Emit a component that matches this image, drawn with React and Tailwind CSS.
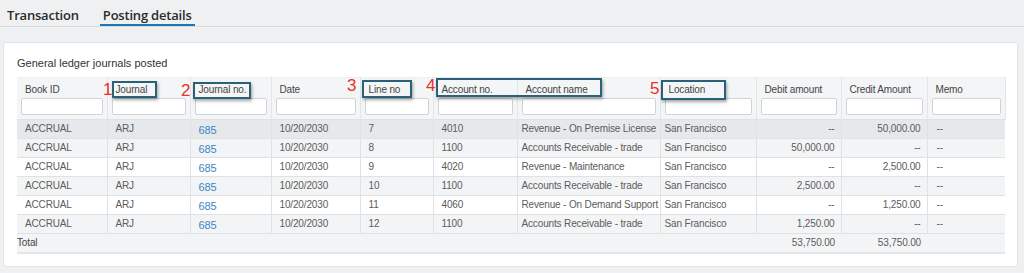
import React from "react";

const cols = [90, 83, 81, 89, 73, 84, 143, 96, 85, 86, 78];
const headers = ["Book ID", "Journal", "Journal no.", "Date", "Line no", "Account no.", "Account name", "Location", "Debit amount", "Credit Amount", "Memo"];

const rows = [
  ["7", "4010", "Revenue - On Premise License", "--", "50,000.00"],
  ["8", "1100", "Accounts Receivable - trade", "50,000.00", "--"],
  ["9", "4020", "Revenue - Maintenance", "--", "2,500.00"],
  ["10", "1100", "Accounts Receivable - trade", "2,500.00", "--"],
  ["11", "4060", "Revenue - On Demand Support", "--", "1,250.00"],
  ["12", "1100", "Accounts Receivable - trade", "1,250.00", "--"],
];

const rowBg = ["bg-[#e6e9eb]", "bg-[#f3f4f5]", "bg-white", "bg-[#f3f4f5]", "bg-white", "bg-[#f3f4f5]"];

function Box({ className }) {
  return (
    <div
      className={
        "absolute border-2 border-[#2b6079] shadow-[1px_2px_3px_rgba(0,0,0,0.35)] " + className
      }
    />
  );
}

function Num({ className, children }) {
  return (
    <div className={"absolute text-[17px] leading-none text-[#e5322d] font-['Liberation_Sans',Arial,sans-serif] " + className}>
      {children}
    </div>
  );
}

export default function App() {
  const td = "border-r border-[#dfe2e4] px-[8px] whitespace-nowrap overflow-hidden";
  return (
    <div className="relative w-[1024px] h-[273px] overflow-hidden bg-[#eff0f1] font-['Liberation_Sans',Arial,sans-serif] text-[#5c5c5c]">
      {/* Tabs */}
      <div className="flex h-[27px] items-start border-b border-[#d8dbdd] pl-[7px]">
        <div className="pt-[7px] text-[13px] leading-[17px] font-semibold text-[#2b2b2b] font-['Open_Sans',sans-serif] tracking-[-0.2px]">
          Transaction
        </div>
        <div className="ml-[21px] flex flex-col items-center">
          <div className="pt-[7px] px-[3px] text-[13px] leading-[17px] font-semibold text-[#2b2b2b] font-['Open_Sans',sans-serif] tracking-[-0.2px]">
            Posting details
          </div>
          <div className="h-[2px] w-full bg-[#1e78b4]" />
        </div>
      </div>

      {/* Card */}
      <div className="ml-[3px] mt-[15px] w-[1015px] h-[225px] rounded-[3px] border border-[#e1e4e6] bg-white pl-[13px]">
        <div className="pt-[13px] h-[34px] text-[11px] leading-[14px] text-[#333]">General ledger journals posted</div>
        <table className="table-fixed border-collapse text-[10px] leading-[12px] tracking-[-0.15px]" style={{ width: 988 }}>
          <colgroup>
            {cols.map((w, i) => (
              <col key={i} style={{ width: w }} />
            ))}
          </colgroup>
          <thead>
            <tr className="bg-[#f4f5f6] border-b border-[#dfe2e4] border-t border-t-[#eceef0]">
              {headers.map((h, i) => (
                <th key={i} className="border-r border-[#e3e6e8] p-0 text-left font-normal align-top">
                  <div className="pt-[6px] pl-[8px] h-[20px] text-[#444] whitespace-nowrap">{h}</div>
                  <div className="mx-[4px] mb-[4px] h-[17px] rounded-[2px] border border-[#cfd3d6] bg-white" />
                </th>
              ))}
            </tr>
          </thead>
          <tbody>
            {rows.map((r, i) => (
              <tr key={i} className={"h-[19px] border-b border-[#dfe2e4] " + rowBg[i]}>
                <td className={td}>ACCRUAL</td>
                <td className={td}>ARJ</td>
                <td className={td + " text-[11px] text-[#3a86c6] pt-[2px]"}>685</td>
                <td className={td}>10/20/2030</td>
                <td className={td}>{r[0]}</td>
                <td className={td}>{r[1]}</td>
                <td className={td + " pl-[4px] pr-0"}>{r[2]}</td>
                <td className={td + " pl-[4px]"}>San Francisco</td>
                <td className={td + " text-right pr-[6px]"}>{r[3]}</td>
                <td className={td + " text-right pr-[6px]"}>{r[4]}</td>
                <td className={td + " border-r-0 pl-[9px]"}>--</td>
              </tr>
            ))}
            <tr className="h-[19px] border-b-2 border-[#e3e6e8] bg-[#f3f4f5]">
              <td className="px-0 text-[#444]">Total</td>
              <td />
              <td />
              <td />
              <td />
              <td />
              <td />
              <td />
              <td className="text-right pr-[6px]">53,750.00</td>
              <td className="text-right pr-[6px]">53,750.00</td>
              <td />
            </tr>
          </tbody>
        </table>
      </div>

      {/* Annotation overlays */}
      <Box className="left-[112px] top-[81px] w-[45px] h-[17px]" />
      <Box className="left-[193px] top-[82px] w-[58px] h-[17px]" />
      <Box className="left-[362px] top-[80px] w-[50px] h-[18px]" />
      <Box className="left-[436px] top-[78px] w-[166px] h-[19px]" />
      <Box className="left-[661px] top-[80px] w-[65px] h-[20px]" />
      <Num className="left-[103px] top-[81px]">1</Num>
      <Num className="left-[181px] top-[82px]">2</Num>
      <Num className="left-[347px] top-[77px]">3</Num>
      <Num className="left-[426px] top-[77px]">4</Num>
      <Num className="left-[650px] top-[80px]">5</Num>
    </div>
  );
}
